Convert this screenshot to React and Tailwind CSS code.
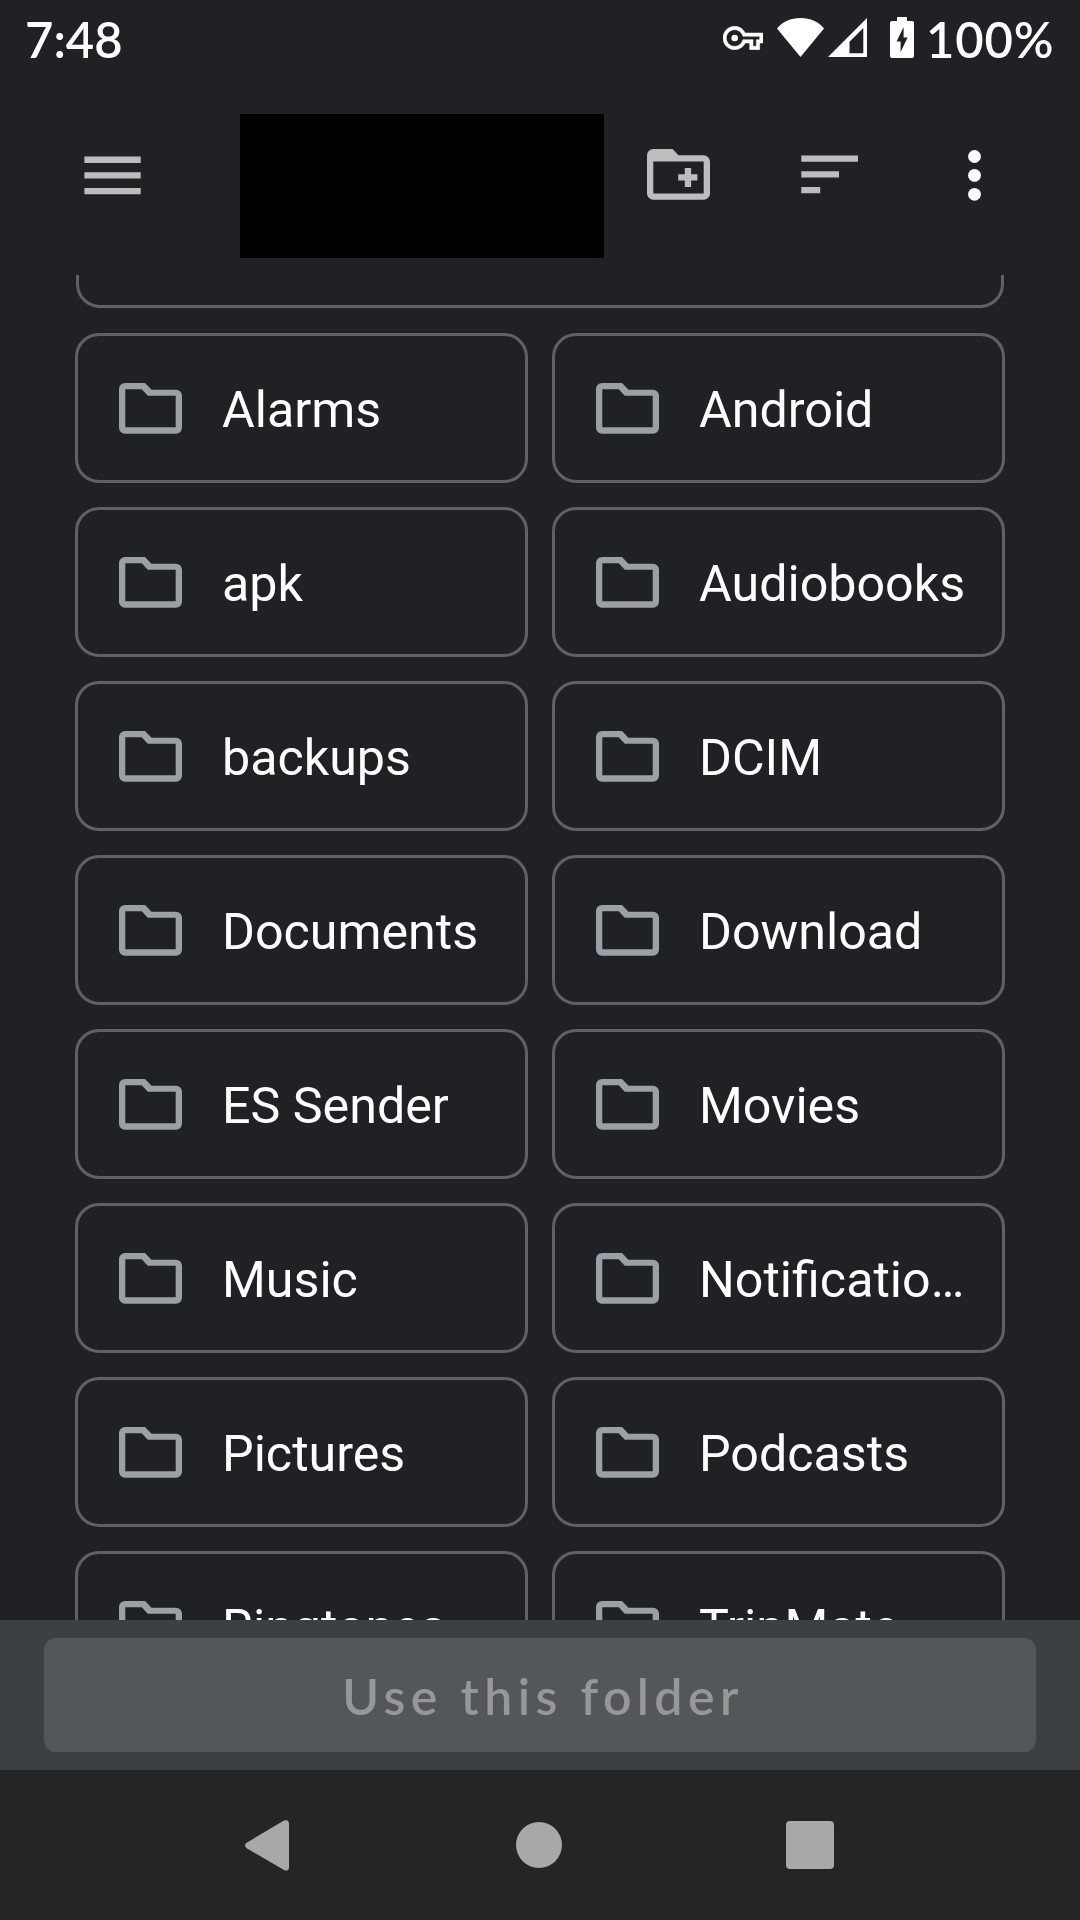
import React from 'react';

const folders = [
    'Alarms',
    'Android',
    'apk',
    'Audiobooks',
    'backups',
    'DCIM',
    'Documents',
    'Download',
    'ES Sender',
    'Movies',
    'Music',
    'Notifications',
    'Pictures',
    'Podcasts',
    'Ringtones',
    'TripMate',
];

function KeyIcon() {
    return (
        <svg className="w-10 h-6" viewBox="0 5 24 14" fill="currentColor">
            <path
                fillRule="evenodd"
                stroke="currentColor"
                strokeWidth="0.3"
                d="M22 19h-6v-4h-2.68c-1.14 2.42-3.6 4-6.32 4-3.86 0-7-3.14-7-7s3.14-7 7-7c2.72 0 5.17 1.58 6.32 4H24v6h-2v4zm-4-2h2v-4h2v-2H11.94l-.23-.67C11.01 8.34 9.11 7 7 7c-2.76 0-5 2.24-5 5s2.24 5 5 5c2.11 0 4.01-1.34 4.71-3.33l.23-.67H18v4z"
            />
            <circle cx="7" cy="12" r="2" />
        </svg>
    );
}

function WifiIcon() {
    return (
        <svg className="w-[47px] h-[39px] ml-[14px]" viewBox="0 0 47 39" fill="currentColor">
            <path d="M23.5 39L0 10.5C5 4 14 0 23.5 0S42 4 47 10.5Z" />
        </svg>
    );
}

function SignalIcon() {
    return (
        <svg className="w-[39px] h-[39px] ml-1" viewBox="0 0 39 39" fill="currentColor">
            <path fillRule="evenodd" d="M39 0V39H0ZM35.3 10L21.5 23.8V35.3H35.3Z" />
        </svg>
    );
}

function BatteryIcon() {
    return (
        <svg className="w-6 h-[41px] ml-[23px]" viewBox="0 0 24 41" fill="currentColor">
            <path
                fillRule="evenodd"
                d="M7 0H17V4H22A2 2 0 0 1 24 6V39A2 2 0 0 1 22 41H2A2 2 0 0 1 0 39V6A2 2 0 0 1 2 4H7ZM13.6 10L6.6 24.5H10.6V35L17.6 20.5H13.6Z"
            />
        </svg>
    );
}

function FolderIcon() {
    return (
        <svg className="w-[63px] h-[51px] mt-px shrink-0 text-[#9aa0a6]" viewBox="0 0 63 51" fill="currentColor">
            <path
                fillRule="evenodd"
                d="M6 0H26L32.5 6.7H57A6 6 0 0 1 63 12.7V44.7A6 6 0 0 1 57 50.7H6A6 6 0 0 1 0 44.7V6A6 6 0 0 1 6 0ZM6.3 6.3V44.2H56.7V12.8H28.8L22.7 6.3Z"
            />
        </svg>
    );
}

function NewFolderIcon() {
    return (
        <svg className="w-[63px] h-[51px]" viewBox="0 0 63 51" fill="currentColor">
            <path
                fillRule="evenodd"
                d="M6 0H25.5L31.5 6.3H56.7A6.3 6.3 0 0 1 63 12.6V44.4A6.3 6.3 0 0 1 56.7 50.7H6.3A6.3 6.3 0 0 1 0 44.4V6.3A6.3 6.3 0 0 1 6 0ZM6.3 12.6V44.4H56.7V12.6Z"
            />
            <path d="M37.8 19H44.1V25.3H50.4V31.6H44.1V38H37.8V31.6H31.2V25.3H37.8Z" />
        </svg>
    );
}

function StatusBar() {
    return (
        <div className="h-[75px] shrink-0 flex items-center px-[25px] font-['Lato',sans-serif] font-semibold text-[49px] leading-none">
            <span className="mt-1">7:48</span>
            <div className="ml-auto w-[332px] flex items-center">
                <KeyIcon />
                <WifiIcon />
                <SignalIcon />
                <BatteryIcon />
                <span className="ml-3 mt-1 tracking-[0.8px]">100%</span>
            </div>
        </div>
    );
}

function Toolbar() {
    return (
        <div className="h-[200px] shrink-0 pt-[5px] flex items-start text-[#bdbdbd]">
            <svg className="w-[57px] h-[39px] ml-[84px] mt-[76px]" viewBox="0 0 57 39" fill="currentColor">
                <path d="M0.4 0.6H56.7V7H0.4ZM0.4 16.3H56.7V22.6H0.4ZM0.4 32H56.7V38.3H0.4Z" />
            </svg>
            <div className="w-[364px] h-36 ml-[99px] mt-[34px] bg-black" />
            <div className="ml-[43px] mt-[69px]">
                <NewFolderIcon />
            </div>
            <svg className="w-[57px] h-[39px] ml-[91px] mt-[75px]" viewBox="0 0 57 39" fill="currentColor">
                <path d="M0.3 0.6H57V6.8H0.3ZM0.3 16.3H38V22.6H0.3ZM0.3 32H19.2V38.3H0.3Z" />
            </svg>
            <svg className="w-[13px] h-[51px] ml-[110px] mt-[70px] text-white" viewBox="0 0 13 51" fill="currentColor">
                <circle cx="6.5" cy="6.5" r="6.4" />
                <circle cx="6.5" cy="25.4" r="6.4" />
                <circle cx="6.5" cy="44.3" r="6.4" />
            </svg>
        </div>
    );
}

function FolderCard({ name }) {
    return (
        <div className="h-[150px] flex items-center rounded-3xl border-3 border-[#606165] pl-[41px] pr-[35px]">
            <FolderIcon />
            <span className="ml-10 mt-1 min-w-0 flex-1 truncate text-[50.2px] leading-[60px]">{name}</span>
        </div>
    );
}

function App() {
    return (
        <div className="w-[1080px] h-[1920px] flex flex-col overflow-hidden bg-[#202124] text-white font-['Roboto',sans-serif]">
            <StatusBar />
            <Toolbar />

            {/* Scrolled folder list */}
            <div className="flex-1 min-h-0 overflow-hidden">
                <div className="h-[33px] flex items-end overflow-hidden mx-[76px]">
                    <div className="w-full h-[150px] shrink-0 rounded-3xl border-3 border-[#606165]" />
                </div>
                <div className="mt-[25px] mx-[75px] grid grid-cols-2 gap-6">
                    {folders.map((name) => (
                        <FolderCard key={name} name={name} />
                    ))}
                </div>
            </div>

            <div className="h-[150px] shrink-0 bg-[#3c4043] px-11 py-[18px]">
                <button className="w-full h-full pl-1.5 pt-0.5 rounded-xl bg-[#535759] text-[#969799] font-['Lato',sans-serif] font-semibold text-[50px] leading-none tracking-[5.4px]">
                    Use this folder
                </button>
            </div>

            {/* System navigation */}
            <div className="h-[150px] shrink-0 flex items-center bg-[#242527] text-[#a7a8aa]">
                <svg className="w-11 h-[51px] ml-[245px]" viewBox="0 0 44 51" fill="currentColor">
                    <path d="M1.2 23L39 0.5Q44 -1 44 4V47Q44 52 39 50L1.2 28Q-1 25.5 1.2 23Z" />
                </svg>
                <div className="size-[46px] ml-[227px] rounded-full bg-[#a7a8aa]" />
                <div className="size-12 ml-[224px] rounded bg-[#a7a8aa]" />
            </div>
        </div>
    );
}

export default App;
